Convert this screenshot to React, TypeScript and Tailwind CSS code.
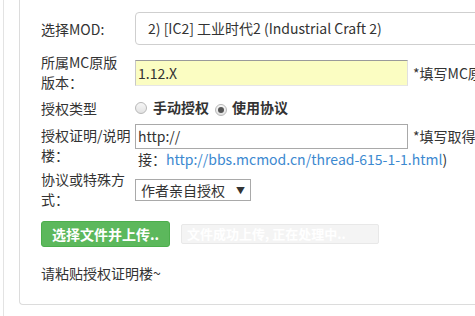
import React from "react";

const font = { fontFamily: '"Noto Sans CJK SC", "Noto Sans", sans-serif' };

function Radio({ checked }: { checked?: boolean }) {
  return (
    <span className="relative inline-flex h-[12px] w-[12px] shrink-0 items-center justify-center rounded-full border border-[#b8b8b8] bg-gradient-to-b from-[#f6f6f6] to-[#e2e2e2]">
      {checked && <span className="h-[6px] w-[6px] rounded-full bg-[#555]" />}
    </span>
  );
}

export default function App() {
  return (
    <div className="h-[316px] w-[475px] overflow-hidden bg-white text-[14px] text-[#333]" style={font}>
      <div className="ml-[3px] h-full border-l border-[#e3e3e3] pl-[15px]">
        <div className="h-[305px] w-[600px] rounded-bl-[4px] border-b border-l border-[#dcdcdc] pl-[21px]">
          {/* Row 1 */}
          <div className="flex items-center pt-[12px]">
            <div className="w-[94px] leading-[20px]">选择MOD:</div>
            <div className="flex h-[33px] w-[420px] items-center rounded-[4px] border border-[#cfcfcf] pl-[12px] text-[#333]">
              2) [IC2] 工业时代2 (Industrial Craft 2)
            </div>
          </div>
          {/* Row 2 */}
          <div className="mt-[7px] flex items-start">
            <div className="w-[94px] shrink-0 break-all pr-[4px] leading-[20px]">所属MC原版版本：</div>
            <div className="mt-[8px] flex items-center">
              <div className="flex h-[26px] w-[273px] shrink-0 items-center border border-t-[#9a9a9a] border-l-[#c8c8c8] border-r-[#e0e0e0] border-b-[#e6e6e6] bg-[#fbfdc2] pl-[2px]">
                1.12.X
              </div>
              <div className="ml-[5px] whitespace-nowrap">*填写MC原版版本号</div>
            </div>
          </div>
          {/* Row 3 */}
          <div className="mt-[5px] flex items-center">
            <div className="w-[94px] shrink-0 leading-[20px]">授权类型</div>
            <div className="flex items-center font-bold">
              <Radio />
              <span className="ml-[6px]">手动授权</span>
              <span className="ml-[6px]"><Radio checked /></span>
              <span className="ml-[5px]">使用协议</span>
            </div>
          </div>
          {/* Row 4 */}
          <div className="mt-[6px] flex items-start">
            <div className="mt-[1px] w-[94px] shrink-0 break-all pr-[4px] leading-[20px]">授权证明/说明楼：</div>
            <div className="flex flex-col">
              <div className="flex items-center">
                <div className="flex h-[25px] w-[273px] shrink-0 items-center border border-[#a9a9a9] bg-white pl-[2px]">
                  http://
                </div>
                <div className="ml-[5px] whitespace-nowrap">*填写取得授权的链</div>
              </div>
              <div className="whitespace-nowrap pl-[3px] leading-[20px]">
                接：<span className="text-[#3c89d0]">http://bbs.mcmod.cn/thread-615-1-1.html</span>)
              </div>
            </div>
          </div>
          {/* Row 5 */}
          <div className="flex items-start">
            <div className="w-[94px] shrink-0 break-all pr-[4px] leading-[20px]">协议或特殊方式：</div>
            <div className="mt-[10px] flex h-[22px] w-[116px] items-center justify-between border border-[#a9a9a9] bg-white pl-[5px] pr-[5px]">
              <span>作者亲自授权</span>
              <span className="text-[9px] leading-none">▼</span>
            </div>
          </div>
          {/* Buttons */}
          <div className="mt-[12px] flex items-center">
            <div className="flex h-[26px] w-[129px] items-center justify-center rounded-[3px] border border-[#4cae4c] bg-[#5cb85c] font-bold text-white">
              选择文件并上传..
            </div>
            <div className="ml-[11px] flex h-[20px] w-[198px] items-center rounded-[2px] border border-[#e8e8e8] bg-[#f4f4f4] pl-[5px] text-[13px] font-bold text-white">
              文件成功上传, 正在处理中..
            </div>
          </div>
          <div className="mt-[16px] leading-[20px]">请粘贴授权证明楼~</div>
        </div>
      </div>
    </div>
  );
}
